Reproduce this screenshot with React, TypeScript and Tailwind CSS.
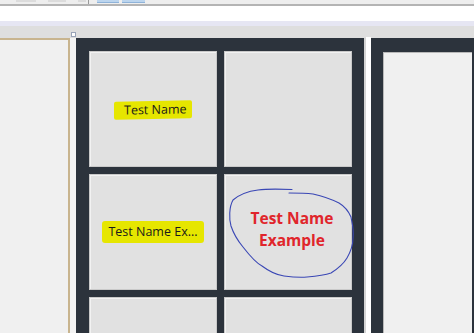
import React from "react";

const font = { fontFamily: '"Open Sans", "Noto Sans", sans-serif' };

function Cell({ children, className = "" }: { children?: React.ReactNode; className?: string }) {
  return (
    <div
      className={
        "relative h-[116px] bg-[#e1e1e1] border border-[#c9c9c9] shadow-[inset_1px_1px_0_#f2f2f2] flex items-center justify-center " +
        className
      }
    >
      {children}
    </div>
  );
}

export default function App() {
  return (
    <div className="w-[474px] h-[333px] overflow-hidden bg-white flex flex-col" style={font}>
      {/* toolbar remnant */}
      <div className="h-[6px] bg-[#eeeeee] border-b-2 border-[#b4b4b4] flex items-start">
        <div className="w-[88px] h-full flex gap-3 pl-4">
          <div className="w-[20px] h-[2px] bg-[#dcdcdc]" />
          <div className="w-[18px] h-[2px] bg-[#dcdcdc]" />
          <div className="w-[8px] h-[2px] bg-[#dcdcdc]" />
        </div>
        <div className="w-px h-full bg-[#9a9a9a]" />
        <div className="flex gap-[3px] ml-[8px]">
          <div className="w-[22px] h-[3px] bg-[#bcd5ee] border-b border-[#8fb3d9]" />
          <div className="w-[23px] h-[3px] bg-[#bcd5ee] border-b border-[#8fb3d9]" />
        </div>
      </div>
      <div className="h-[15px] bg-white" />
      <div className="h-[5px] bg-[#e6e6f3]" />
      <div className="flex-1 flex bg-[#dedede] pt-[11px] min-h-0">
        {/* left panel */}
        <div className="w-[70px] mt-px bg-[#f0f0f0] border-t-2 border-r-2 border-[#c8b48e]" />
        <div className="relative w-[6px] flex flex-col">
          <div className="absolute left-[1px] top-[-5px] w-[5px] h-[5px] bg-white border border-[#9aa4b8]" />
          <div className="flex-1 mt-[1px] bg-[#f3f3f3]" />
        </div>
        {/* main dark panel */}
        <div className="w-[288px] mt-[1px] bg-[#2c333c] pt-[13px] pl-[13px] pr-[12px]">
          <div className="grid grid-cols-[128px_128px] gap-x-[7px] gap-y-[7px]">
            <Cell>
              <span className="text-[12.5px] leading-[18px] text-[#1a1a1a] bg-[#e6e600] pl-[10px] pr-[5px] rounded-[2px] -skew-y-1 mt-[2px]">
                Test Name
              </span>
            </Cell>
            <Cell />
            <Cell>
              <span className="text-[12.5px] leading-[22px] text-[#1a1a1a] bg-[#e6e600] px-[6px] rounded-[3px]">
                Test Name Ex...
              </span>
            </Cell>
            <Cell className="overflow-visible">
              <div className="flex flex-col items-center pl-[8px] pb-[6px] text-[15.5px] leading-[22px] font-bold text-[#e0252b]">
                <span>Test Name</span>
                <span>Example</span>
              </div>
              <svg
                className="absolute left-[-1px] top-[-1px] overflow-visible pointer-events-none"
                width="130"
                height="118"
                viewBox="224 175 130 118"
              >
                <path
                  d="M292 190.5 C280 190 265 190 258 191 C250 192 240 195 233 201 C229 208 229 220 231 227 C234 236 238 242 243 248 C250 257 256 264 262 267 C270 273 276 276 284 277 C292 278 300 278.5 307 278 C318 277 325 276 331 274 C339 269 344 264 347 259 C351 252 353 246 353 239 C354 230 352 224 351 218 C348 211 344 207 339 204 C331 200 322 197 313 195 C305 194 296 194 289 194"
                  fill="none"
                  stroke="#3a47b5"
                  strokeWidth="1.1"
                  strokeLinecap="round"
                />
              </svg>
            </Cell>
            <Cell />
            <Cell />
          </div>
        </div>
        <div className="w-[2px] bg-[#d4d4d4] mt-[1px]" />
        <div className="w-[5px] bg-white" />
        {/* right dark panel */}
        <div className="flex-1 mt-[1px] bg-[#2c333c] pt-[14px] pl-[12px] pr-[2px] flex">
          <div className="flex-1 bg-[#f0f0f0] border-l border-t border-[#b9b9b9]" />
        </div>
      </div>
    </div>
  );
}
